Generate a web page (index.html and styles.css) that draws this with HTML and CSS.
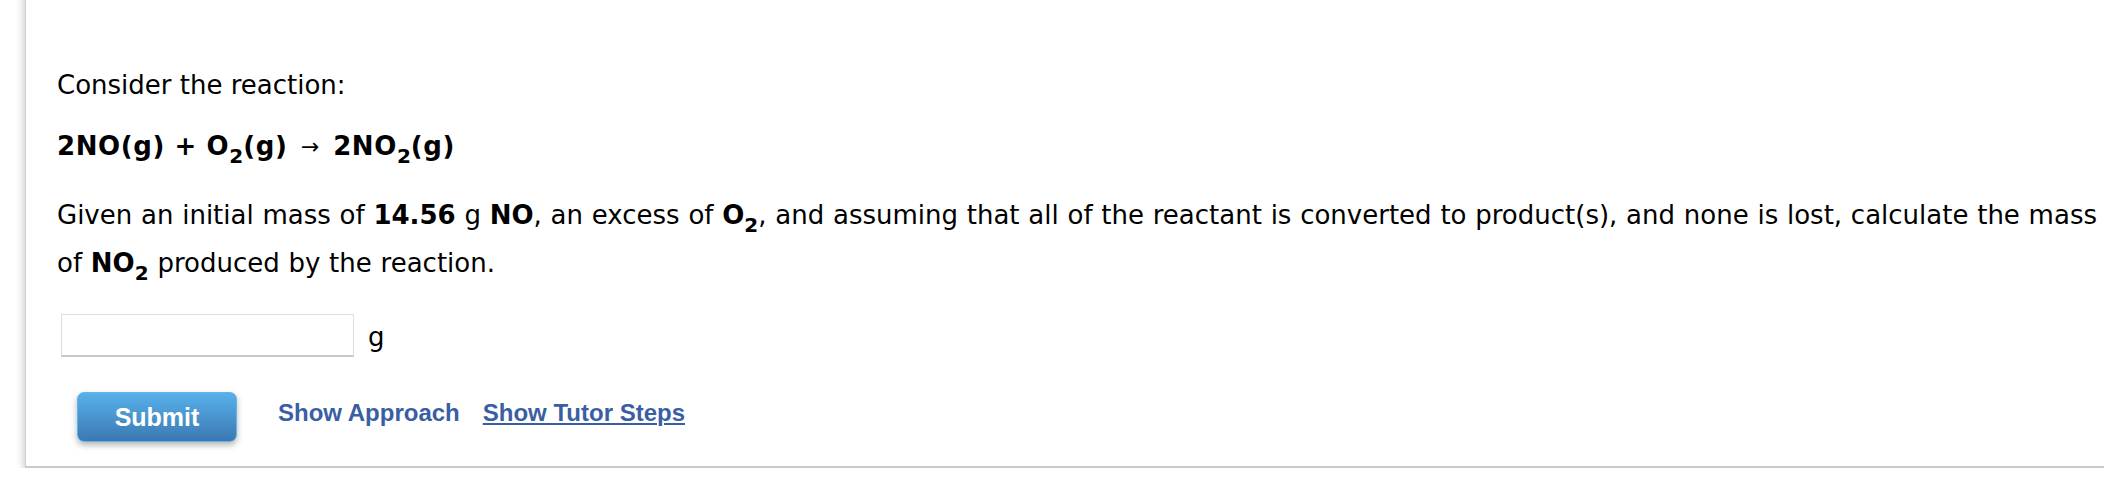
FILE: index.html
```html
<!DOCTYPE html>
<html lang="en">
<head>
<meta charset="utf-8">
<title>Consider the reaction</title>
<link rel="stylesheet" href="styles.css">
</head>
<body>
<div class="card">
  <p class="intro">Consider the reaction:</p>
  <p class="equation">2NO(g) + O<sub class="sub">2</sub>(g) <span class="arrow">&rarr;</span> 2NO<sub class="sub">2</sub>(g)</p>
  <p class="question">Given an initial mass of <b>14.56</b> g <b>NO</b>, an excess of <b>O<sub class="sub">2</sub></b>, and assuming that all of the reactant is converted to product(s), and none is lost, calculate the mass of <b>NO<sub class="sub">2</sub></b> produced by the reaction.</p>
  <div class="answer-row">
    <input class="answer" type="text" aria-label="mass of NO2">
    <span class="unit">g</span>
  </div>
  <div class="action-row">
    <button class="submit" type="button">Submit</button>
    <div class="links">
      <a class="link" href="#">Show Approach</a>
      <a class="link underlined" href="#">Show Tutor Steps</a>
    </div>
  </div>
</div>
</body>
</html>
```

FILE: styles.css
```css
html, body {
  margin: 0;
  padding: 0;
  background: #ffffff;
  overflow: hidden;
}

.card {
  margin-top: -30px;
  margin-left: 25px;
  width: 2200px;
  padding: 91px 0 24px 31px;
  background: #ffffff;
  border-left: 1px solid #cfcfcf;
  border-bottom: 2px solid #c9c9c9;
  box-shadow: 0 3px 9px rgba(0, 0, 0, 0.28);
  font-family: "DejaVu Sans", Verdana, sans-serif;
  font-size: 26px;
  line-height: 48px;
  color: #000000;
}

.card p {
  margin: 0;
}

.intro {
  margin-bottom: 13px !important;
}

.equation {
  font-weight: bold;
  letter-spacing: 0.6px;
  margin-bottom: 20px !important;
}

.question {
  width: 2060px;
  word-spacing: 0.5px;
  margin-bottom: 27px !important;
}

.question b {
  font-weight: bold;
}

.sub {
  font-size: 20px;
  line-height: 0;
  vertical-align: -8px;
  font-weight: bold;
  letter-spacing: 0;
}

.arrow {
  font-size: 22px;
  font-weight: normal;
  vertical-align: 1px;
  margin: 0 4px;
  letter-spacing: 0;
}

.answer-row {
  display: flex;
  align-items: flex-start;
  margin-bottom: 35px;
  margin-left: 4px;
  height: 43px;
}

.answer {
  box-sizing: border-box;
  width: 293px;
  height: 43px;
  margin: 0;
  border: 1px solid #dedede;
  border-bottom: 2px solid #c9c9c9;
  background: #ffffff;
  outline: none;
}

.unit {
  margin-left: 14px;
  padding-top: 3px;
  line-height: 40px;
}

.action-row {
  display: flex;
  align-items: flex-start;
  margin-left: 20px;
}

.submit {
  box-sizing: border-box;
  width: 160px;
  height: 50px;
  border: 1px solid #64b4ec;
  border-radius: 7px;
  background: linear-gradient(#58b1ea, #3b78b3);
  box-shadow: 0 3px 6px rgba(0, 0, 0, 0.3);
  color: #ffffff;
  font-family: "Liberation Sans", Arial, sans-serif;
  font-weight: bold;
  font-size: 25px;
  padding: 0;
  cursor: pointer;
}

.links {
  display: flex;
  gap: 23px;
  margin-left: 41px;
  margin-top: 8px;
}

.link {
  font-family: "Liberation Sans", Arial, sans-serif;
  font-weight: bold;
  font-size: 24px;
  line-height: 26px;
  color: #3a5ea4;
  text-decoration: none;
}

.underlined {
  text-decoration: underline;
  text-decoration-thickness: 2px;
  text-underline-offset: 2px;
}
```
